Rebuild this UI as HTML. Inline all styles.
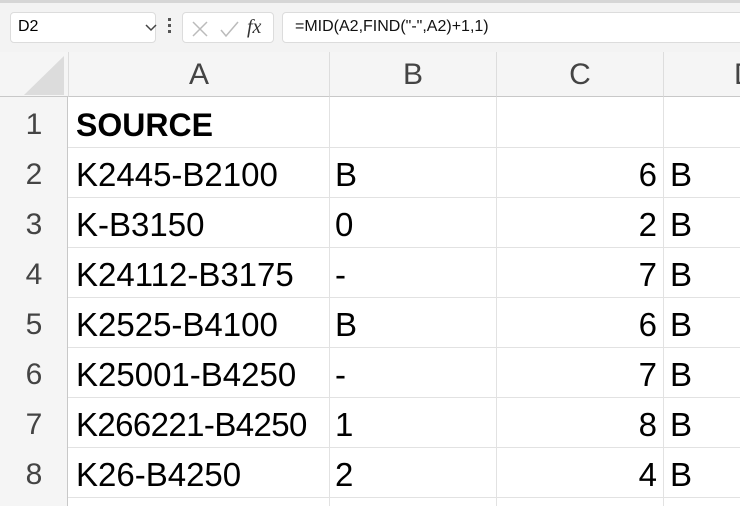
<!DOCTYPE html>
<html><head><style>
body{margin:0;width:740px;height:506px;overflow:hidden;background:#fff;font-family:"Liberation Sans",sans-serif;position:relative}
.tb{position:absolute;left:0;top:0;width:740px;height:52px;background:#f3f3f3;border-top:3px solid #d6d6d6;box-sizing:border-box}
.box{position:absolute;background:#fff;border:1px solid #dcdcdc;border-radius:4px;box-sizing:border-box}
.hdr{position:absolute;top:52px;height:45px;background:#f5f5f5;border-bottom:1px solid #c8c8c8;box-sizing:border-box;font-size:30px;color:#444;text-align:center;line-height:45px}
.rh{position:absolute;left:0;width:68px;background:#f5f5f5;border-right:1px solid #c8c8c8;box-sizing:border-box}
.hl{position:absolute;left:68px;width:672px;height:1px;background:#e2e2e2}
.vl{position:absolute;top:97px;height:409px;width:1px;background:#e2e2e2}
.c{position:absolute;font-size:33px;color:#000;line-height:50px;white-space:nowrap;margin-top:2px}
.n{left:0;width:68px;text-align:center;color:#444;font-size:30px}
</style></head><body>
<div class="tb">
 <div class="box" style="left:10px;top:9px;width:146px;height:31px"><span style="position:absolute;left:7px;top:5px;font-size:16px">D2</span><svg style="position:absolute;left:134px;top:10px" width="12" height="10"><path d="M1 2l5 5 5-5" stroke="#444" fill="none" stroke-width="1.5"/></svg></div>
 <div style="position:absolute;left:168px;top:15px;width:3px;height:3px;background:#555;box-shadow:0 6px #555,0 12px #555"></div>
 <div class="box" style="left:182px;top:9px;width:92px;height:31px">
  <svg style="position:absolute;left:8px;top:7px" width="80" height="18"><path d="M2 2l14 14M16 2L2 16" stroke="#bbb" stroke-width="1.5"/><path d="M30 10l5 6 12-14" stroke="#bbb" stroke-width="1.5" fill="none"/></svg>
  <span style="position:absolute;left:64px;top:3px;font-family:'Liberation Serif',serif;font-style:italic;font-size:20px;color:#333">fx</span></div>
 <div class="box" style="left:282px;top:9px;width:470px;height:31px"><span style="position:absolute;left:12px;top:5px;font-size:16px;color:#111">=MID(A2,FIND("-",A2)+1,1)</span></div>
</div>
<div class="hdr" style="left:0;width:68px"><svg width="68" height="45" style="position:absolute;left:0;top:0"><path d="M24 43L64 4V43Z" fill="#dcdcdc"/></svg></div>
<div class="hdr" style="left:68px;width:261px;border-left:1px solid #ddd">A</div>
<div class="hdr" style="left:329px;width:167px;border-left:1px solid #ddd">B</div>
<div class="hdr" style="left:496px;width:167px;border-left:1px solid #ddd">C</div>
<div class="hdr" style="left:663px;width:77px;border-left:1px solid #ddd;text-align:left;padding-left:70px">D</div>
<div class="vl" style="left:329px"></div><div class="vl" style="left:496px"></div><div class="vl" style="left:663px"></div>
<div class="rh" style="top:97px;height:409px"></div>
<div class="hl" style="top:147px"></div><div class="hl" style="top:197px"></div><div class="hl" style="top:247px"></div><div class="hl" style="top:297px"></div><div class="hl" style="top:347px"></div><div class="hl" style="top:397px"></div><div class="hl" style="top:447px"></div><div class="hl" style="top:497px"></div>
<div class="c n" style="top:98px">1</div>
<div class="c n" style="top:148px">2</div>
<div class="c n" style="top:198px">3</div>
<div class="c n" style="top:248px">4</div>
<div class="c n" style="top:298px">5</div>
<div class="c n" style="top:348px">6</div>
<div class="c n" style="top:398px">7</div>
<div class="c n" style="top:448px">8</div>
<div class="c" style="left:76px;top:98px;font-weight:bold;font-size:32px">SOURCE</div>
<div class="c" style="left:76px;top:148px">K2445-B2100</div><div class="c" style="left:335px;top:148px">B</div><div class="c" style="left:500px;width:157px;text-align:right;top:148px">6</div><div class="c" style="left:670px;top:148px">B</div>
<div class="c" style="left:76px;top:198px">K-B3150</div><div class="c" style="left:335px;top:198px">0</div><div class="c" style="left:500px;width:157px;text-align:right;top:198px">2</div><div class="c" style="left:670px;top:198px">B</div>
<div class="c" style="left:76px;top:248px">K24112-B3175</div><div class="c" style="left:335px;top:248px">-</div><div class="c" style="left:500px;width:157px;text-align:right;top:248px">7</div><div class="c" style="left:670px;top:248px">B</div>
<div class="c" style="left:76px;top:298px">K2525-B4100</div><div class="c" style="left:335px;top:298px">B</div><div class="c" style="left:500px;width:157px;text-align:right;top:298px">6</div><div class="c" style="left:670px;top:298px">B</div>
<div class="c" style="left:76px;top:348px">K25001-B4250</div><div class="c" style="left:335px;top:348px">-</div><div class="c" style="left:500px;width:157px;text-align:right;top:348px">7</div><div class="c" style="left:670px;top:348px">B</div>
<div class="c" style="left:76px;top:398px;letter-spacing:-0.6px">K266221-B4250</div><div class="c" style="left:335px;top:398px">1</div><div class="c" style="left:500px;width:157px;text-align:right;top:398px">8</div><div class="c" style="left:670px;top:398px">B</div>
<div class="c" style="left:76px;top:448px">K26-B4250</div><div class="c" style="left:335px;top:448px">2</div><div class="c" style="left:500px;width:157px;text-align:right;top:448px">4</div><div class="c" style="left:670px;top:448px">B</div>
</body></html>
